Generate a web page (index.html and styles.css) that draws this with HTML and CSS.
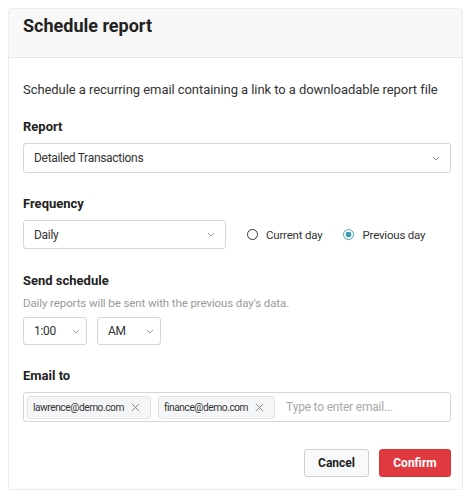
FILE: index.html
```html
<!DOCTYPE html>
<html>
<head>
<meta charset="utf-8">
<link rel="stylesheet" href="styles.css">
</head>
<body>
<div class="card">
  <div class="card-header"><h1 class="title">Schedule report</h1></div>
  <div class="card-body">
    <p class="desc">Schedule a recurring email containing a link to a downloadable report file</p>

    <div class="label label-first">Report</div>
    <div class="select select-full"><span>Detailed Transactions</span><svg class="chev" viewBox="0 0 8 5" width="8" height="5"><path d="M1 1 L4 4 L7 1" fill="none" stroke="#9a9a9a" stroke-width="1"/></svg></div>

    <div class="label">Frequency</div>
    <div class="freq-row">
      <div class="select select-freq"><span>Daily</span><svg class="chev" viewBox="0 0 8 5" width="8" height="5"><path d="M1 1 L4 4 L7 1" fill="none" stroke="#9a9a9a" stroke-width="1"/></svg></div>
      <div class="radio"><span class="circle"></span><span>Current day</span></div>
      <div class="radio"><span class="circle checked"></span><span>Previous day</span></div>
    </div>

    <div class="label label-send">Send schedule</div>
    <div class="hint">Daily reports will be sent with the previous day's data.</div>
    <div class="time-row">
      <div class="select select-time"><span>1:00</span><svg class="chev" viewBox="0 0 8 5" width="8" height="5"><path d="M1 1 L4 4 L7 1" fill="none" stroke="#9a9a9a" stroke-width="1"/></svg></div>
      <div class="select select-time"><span>AM</span><svg class="chev" viewBox="0 0 8 5" width="8" height="5"><path d="M1 1 L4 4 L7 1" fill="none" stroke="#9a9a9a" stroke-width="1"/></svg></div>
    </div>

    <div class="label">Email to</div>
    <div class="email-box">
      <div class="chip"><span>lawrence@demo.com</span><svg class="x" viewBox="0 0 10 10" width="10" height="10"><path d="M1 1 L9 9 M9 1 L1 9" stroke="#808080" stroke-width="1"/></svg></div>
      <div class="chip"><span>finance@demo.com</span><svg class="x" viewBox="0 0 10 10" width="10" height="10"><path d="M1 1 L9 9 M9 1 L1 9" stroke="#808080" stroke-width="1"/></svg></div>
      <span class="placeholder">Type to enter email...</span>
    </div>

    <div class="actions">
      <button class="btn btn-cancel">Cancel</button>
      <button class="btn btn-confirm">Confirm</button>
    </div>
  </div>
</div>
</body>
</html>
```
FILE: styles.css
```css
html, body {
  margin: 0;
  padding: 0;
  background: #ffffff;
}
body {
  padding: 8px 11px 8px 8px;
  font-family: Roboto, "Liberation Sans", Arial, sans-serif;
  color: #2b2b2b;
}
.card {
  width: 455px;
  box-sizing: border-box;
  border: 1px solid #ececec;
  border-radius: 3px;
  background: #fff;
}
.card-header {
  height: 49px;
  background: #f8f8f8;
  border-bottom: 1px solid #e6e6e6;
  padding: 6px 0 0 14px;
  box-sizing: border-box;
}
.title {
  margin: 0;
  font-size: 18px;
  line-height: 21px;
  font-weight: 700;
  color: #222;
}
.card-body {
  padding: 22px 11px 12px 14px;
}
.desc {
  margin: 0;
  font-size: 13px;
  letter-spacing: -0.06px;
  line-height: 20px;
  color: #333;
  white-space: nowrap;
}
.label {
  font-size: 13px;
  font-weight: 700;
  line-height: 20px;
  color: #222;
  margin-top: 21px;
  margin-bottom: 6px;
}
.label-first {
  margin-top: 17px;
}
.label-send {
  margin-top: 22px;
}
.select {
  box-sizing: border-box;
  height: 30px;
  border: 1px solid #d6d6d6;
  border-radius: 3px;
  display: flex;
  align-items: center;
  justify-content: space-between;
  padding: 0 10px 0 10px;
  font-size: 12px;
  letter-spacing: -0.3px;
  color: #333;
  background: #fff;
}
.chev {
  display: block;
  flex: none;
}
.select-full {
  width: 428px;
}
.freq-row {
  display: flex;
  align-items: center;
}
.select-freq {
  width: 203px;
  height: 29px;
  margin-right: 21px;
}
.radio {
  display: flex;
  align-items: center;
  font-size: 11.5px;
  letter-spacing: -0.2px;
  color: #333;
  margin-right: 21px;
}
.circle {
  width: 11px;
  height: 11px;
  box-sizing: border-box;
  border: 1.5px solid #333;
  border-radius: 50%;
  margin-right: 8px;
  flex: none;
}
.circle.checked {
  border: 1px solid #4aa3b8;
  background: radial-gradient(circle, #3d9db4 0 2.6px, #ffffff 3.2px);
}
.hint {
  font-size: 11.5px;
  letter-spacing: -0.1px;
  line-height: 18px;
  color: #9a9a9a;
  margin-top: -3px;
  margin-bottom: 5px;
}
.time-row {
  display: flex;
  gap: 10px;
}
.select-time {
  width: 64px;
  height: 28px;
  padding-right: 6px;
}
.email-box {
  box-sizing: border-box;
  width: 428px;
  height: 30px;
  border: 1px solid #d6d6d6;
  border-radius: 3px;
  display: flex;
  align-items: center;
  padding: 0 3px;
  gap: 7px;
}
.chip {
  box-sizing: border-box;
  height: 23px;
  display: flex;
  align-items: center;
  background: #f5f6f8;
  border: 1px solid #e1e3e6;
  border-radius: 3px;
  padding: 0 10px 0 5px;
  font-size: 10.2px;
  letter-spacing: -0.45px;
  color: #333;
}
.chip .x {
  width: 9px;
  height: 9px;
  margin-left: 7px;
}
.placeholder {
  margin-left: 4px;
  font-size: 12px;
  letter-spacing: -0.2px;
  color: #a8a8a8;
}
.actions {
  display: flex;
  justify-content: flex-end;
  gap: 10px;
  margin-top: 27px;
}
.btn {
  height: 28px;
  border-radius: 3px;
  font-family: Roboto, "Liberation Sans", Arial, sans-serif;
  font-size: 12px;
  font-weight: 700;
  padding: 0;
  cursor: pointer;
}
.btn-cancel {
  width: 65px;
  background: #f8f9fa;
  border: 1px solid #cfcfcf;
  color: #222;
}
.btn-confirm {
  width: 72px;
  background: #e03a40;
  border: 1px solid #d8343a;
  color: #fff;
}
```
